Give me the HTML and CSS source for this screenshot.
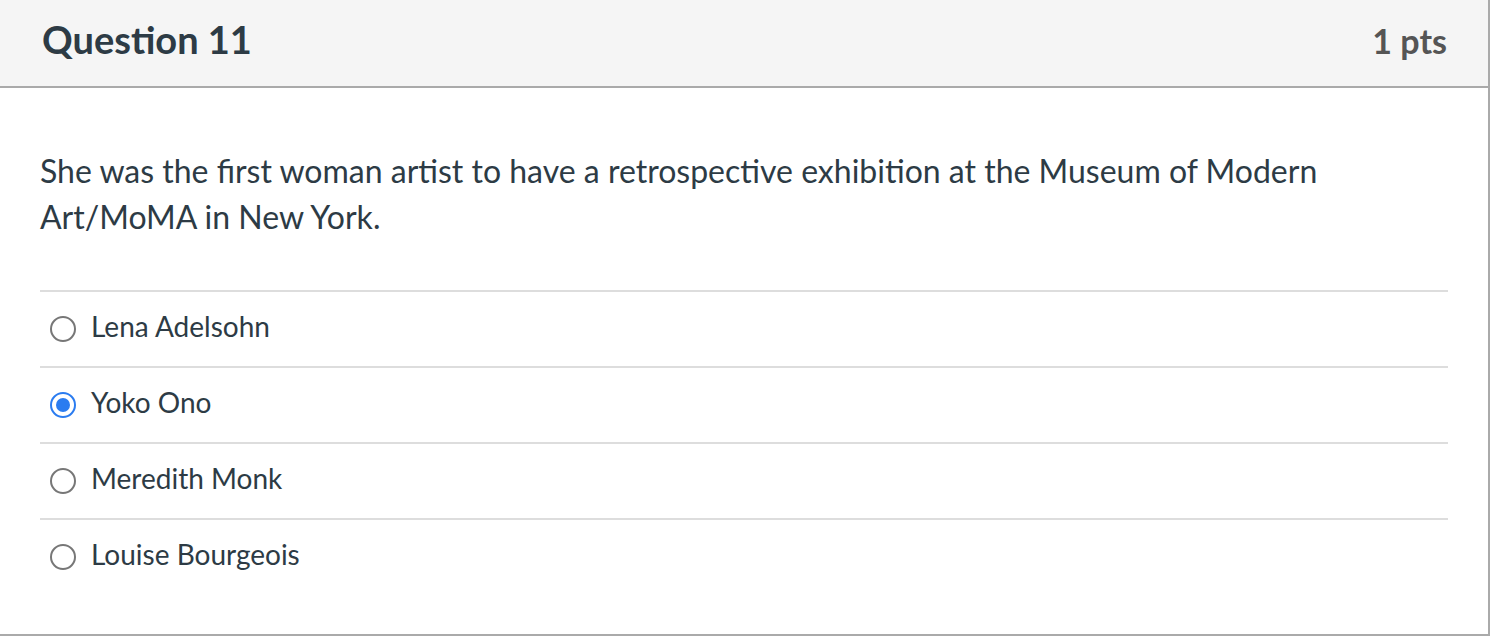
FILE: index.html
```html
<!DOCTYPE html>
<html lang="en">
<head>
<meta charset="utf-8">
<title>Question 11</title>
<link rel="stylesheet" href="styles.css">
</head>
<body>
<div class="question">
  <div class="question-header">
    <h2 class="question-title">Question 11</h2>
    <div class="question-points">1 pts</div>
  </div>
  <div class="question-body">
    <p class="question-text">She was the first woman artist to have a retrospective exhibition at the Museum of Modern Art/MoMA in New York.</p>
    <div class="answers">
      <label class="answer">
        <span class="radio"></span>
        <span class="answer-label">Lena Adelsohn</span>
      </label>
      <label class="answer">
        <span class="radio checked"></span>
        <span class="answer-label">Yoko Ono</span>
      </label>
      <label class="answer">
        <span class="radio"></span>
        <span class="answer-label">Meredith Monk</span>
      </label>
      <label class="answer">
        <span class="radio"></span>
        <span class="answer-label">Louise Bourgeois</span>
      </label>
    </div>
  </div>
</div>
</body>
</html>
```
FILE: styles.css
```css
* { box-sizing: border-box; }
html, body { margin: 0; padding: 0; background: #fff; }
body {
  font-family: Lato, "Open Sans", sans-serif;
  color: #2d3b45;
  overflow: hidden;
}
.question {
  width: 1492px;
  margin: -2px 0 0 -2px;
  border: 2px solid #aaaaaa;
  background: #fff;
}
.question-header {
  height: 88px;
  background: #f5f5f5;
  border-bottom: 2px solid #aaaaaa;
  display: flex;
  align-items: baseline;
  justify-content: space-between;
  padding: 20px 41px 0 42px;
}
.question-title {
  margin: 0;
  font-size: 38px;
  font-weight: 700;
  line-height: 1;
  color: #2d3b45;
}
.question-points {
  font-size: 34px;
  font-weight: 700;
  line-height: 1;
  color: #555555;
}
.question-body {
  padding: 60px 40px 40px 40px;
}
.question-text {
  margin: 0 0 50px 0;
  font-size: 32px;
  line-height: 46px;
}
.answer {
  display: flex;
  align-items: center;
  height: 76px;
  border-top: 2px solid #dddddd;
  padding-left: 10px;
  gap: 15px;
}
.radio {
  width: 26px;
  height: 26px;
  border-radius: 50%;
  border: 2px solid #777777;
  background: #fff;
  flex: none;
  display: flex;
  align-items: center;
  justify-content: center;
}
.radio.checked {
  border-color: #2b7cf0;
}
.radio.checked::after {
  content: "";
  width: 14px;
  height: 14px;
  border-radius: 50%;
  background: #2b7cf0;
}
.answer-label {
  font-size: 28px;
  line-height: 1;
  margin-bottom: 6px;
}
```
